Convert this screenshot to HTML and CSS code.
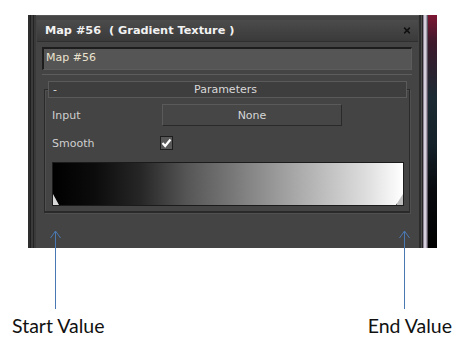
FILE: index.html
```html
<!DOCTYPE html>
<html lang="en">
<head>
<meta charset="UTF-8">
<title>Gradient Texture</title>
<link rel="stylesheet" href="styles.css">
</head>
<body>
<div class="window">
  <div class="edge-left"></div>
  <div class="main">
    <div class="title-bar">
      <span class="title">Map #56&nbsp;&nbsp;( Gradient Texture )</span>
      <svg class="close" width="8" height="7" viewBox="0 0 8 7"><path d="M1 0.5 L7 6.5 M7 0.5 L1 6.5" /></svg>
    </div>
    <div class="name-field">Map #56</div>
    <div class="rollout">
      <div class="rollout-head">
        <span class="toggle">-</span>
        <span class="rollout-title">Parameters</span>
      </div>
      <div class="group">
        <div class="row">
          <span class="label">Input</span>
          <span class="map-button">None</span>
        </div>
        <div class="row">
          <span class="label">Smooth</span>
          <span class="checkbox">
            <svg width="11" height="10" viewBox="0 0 11 10"><path d="M1.5 5 L4.2 8 L9.5 1.5" fill="none" stroke="#fff" stroke-width="2.2"/></svg>
          </span>
        </div>
        <div class="ramp">
          <span class="flag flag-start"></span>
          <span class="flag flag-end"></span>
        </div>
      </div>
    </div>
  </div>
  <div class="edge-right"></div>
</div>

<div class="labels">
  <span>Start Value</span>
  <span>End Value</span>
</div>

<svg class="pointers" width="469" height="361" viewBox="0 0 469 361">
  <line x1="55.5" y1="231" x2="55.5" y2="309" />
  <polyline points="50.5,238 55.5,231 60.5,238" />
  <line x1="404.5" y1="231" x2="404.5" y2="309" />
  <polyline points="399.5,238 404.5,231 409.5,238" />
</svg>
</body>
</html>
```

FILE: styles.css
```css
body, html {
  margin: 0;
  padding: 0;
  background: #fff;
}

body {
  position: relative;
  width: 469px;
  height: 361px;
  overflow: hidden;
}

.window {
  display: flex;
  width: 409px;
  height: 233px;
  margin: 15px 0 0 28px;
  font-family: 'DejaVu Sans', sans-serif;
  font-size: 11px;
}

.edge-left {
  width: 8px;
  background: linear-gradient(to right, #2e2e2e 0 2px, #1f1f1f 2px 3px, #3b3b3b 3px 5px, #232323 5px 6px, #3a3a3a 6px 8px);
}

.edge-right {
  width: 18px;
  background:
    linear-gradient(to right, #2b2b2b 0 2px, #4e4e4e 2px 3px, #262626 3px 4px, #8f8797 4px 5px, #d6cfdc 5px 7px, #a79fb0 7px 8px, #5b5560 8px 9px, transparent 9px),
    linear-gradient(to bottom, #7d1733 0, #3c1a2c 12%, #1c2a33 35%, #15222a 55%, #07090d 75%, #000 100%);
}

.main {
  flex: 1;
  background: #444;
  border-top: 1px solid #565656;
  padding-top: 4px;
  display: flex;
  flex-direction: column;
}

.title-bar {
  height: 21px;
  margin: 0 1px;
  padding: 0 7px 0 8px;
  display: flex;
  justify-content: space-between;
  align-items: center;
  background: linear-gradient(#4b4b4b, #3a3a3a);
  border-bottom: 1px solid #2f2f2f;
}

.title {
  color: #f2f2f2;
  font-weight: bold;
  font-size: 11.3px;
}

.close {
  stroke: #121212;
  stroke-width: 2.2;
  fill: none;
  filter: drop-shadow(0 0 0.6px #8a8a8a);
}

.name-field {
  height: 20px;
  margin: 5px 7px 0 6px;
  padding-left: 2px;
  background: #555;
  border-top: 2px solid #1d1d1d;
  border-left: 2px solid #1d1d1d;
  border-right: 1px solid #5c5c5c;
  border-bottom: 1px solid #5c5c5c;
  color: #eae3cf;
  line-height: 17px;
}

.rollout {
  margin: 4px 7px 0 6px;
  border-top: 1px solid #5d5d5d;
  padding: 6px 2px 0;
}

.rollout-head {
  position: relative;
  height: 15px;
  margin: 0 3px 0 4px;
  padding: 0 4px;
  border: 1px solid #5a5a5a;
  background: #3e3e3e;
  color: #d8d8d8;
  display: flex;
  align-items: center;
}

.toggle {
  width: 10px;
}

.rollout-title {
  flex: 1;
  text-align: center;
  padding-right: 14px;
}

.group {
  margin-top: -9px;
  padding: 14px 5px 5px 7px;
  border: 1px solid #2a2a2a;
  border-bottom-width: 2px;
  box-shadow: inset 1px 1px 0 #505050, 1px 1px 0 #505050;
}

.row {
  display: flex;
  align-items: center;
  height: 22px;
  margin-bottom: 6px;
}

.label {
  width: 110px;
  color: #cfcfcf;
}

.map-button {
  width: 178px;
  height: 20px;
  border: 1px solid #2a2a2a;
  border-top-color: #5a5a5a;
  border-left-color: #5a5a5a;
  background: #464646;
  color: #d6d6d6;
  display: flex;
  align-items: center;
  justify-content: center;
}

.checkbox {
  width: 11px;
  height: 12px;
  margin-left: -2px;
  border: 1px solid #1e1e1e;
  background: #585858;
  display: flex;
  align-items: center;
  justify-content: center;
}

.ramp {
  position: relative;
  height: 42px;
  margin-top: 8px;
  border: 1px solid #1b1b1b;
  background: linear-gradient(to right, #000 0%, #0c0c0c 12%, #262626 25%, #555 38%, #777 51%, #aaa 70%, #dcdcdc 89%, #fff 100%);
}

.flag {
  position: absolute;
  bottom: 0;
  width: 6px;
  height: 11px;
  background: #d8d8d8;
}

.flag-start {
  left: 0;
  clip-path: polygon(0 0, 0 100%, 100% 100%);
}

.flag-end {
  right: 0;
  background: #bcbcbc;
  border-left: 1px solid #333;
  clip-path: polygon(100% 0, 100% 100%, 0 100%);
}

.labels {
  display: flex;
  justify-content: space-between;
  margin-top: 66px;
  padding: 0 17px 0 12px;
  font-family: Lato, sans-serif;
  font-size: 19.5px;
  line-height: 24px;
  color: #111;
}

.pointers {
  position: absolute;
  top: 0;
  left: 0;
  pointer-events: none;
  fill: none;
  stroke: #4a79b2;
  stroke-width: 1;
}
```
